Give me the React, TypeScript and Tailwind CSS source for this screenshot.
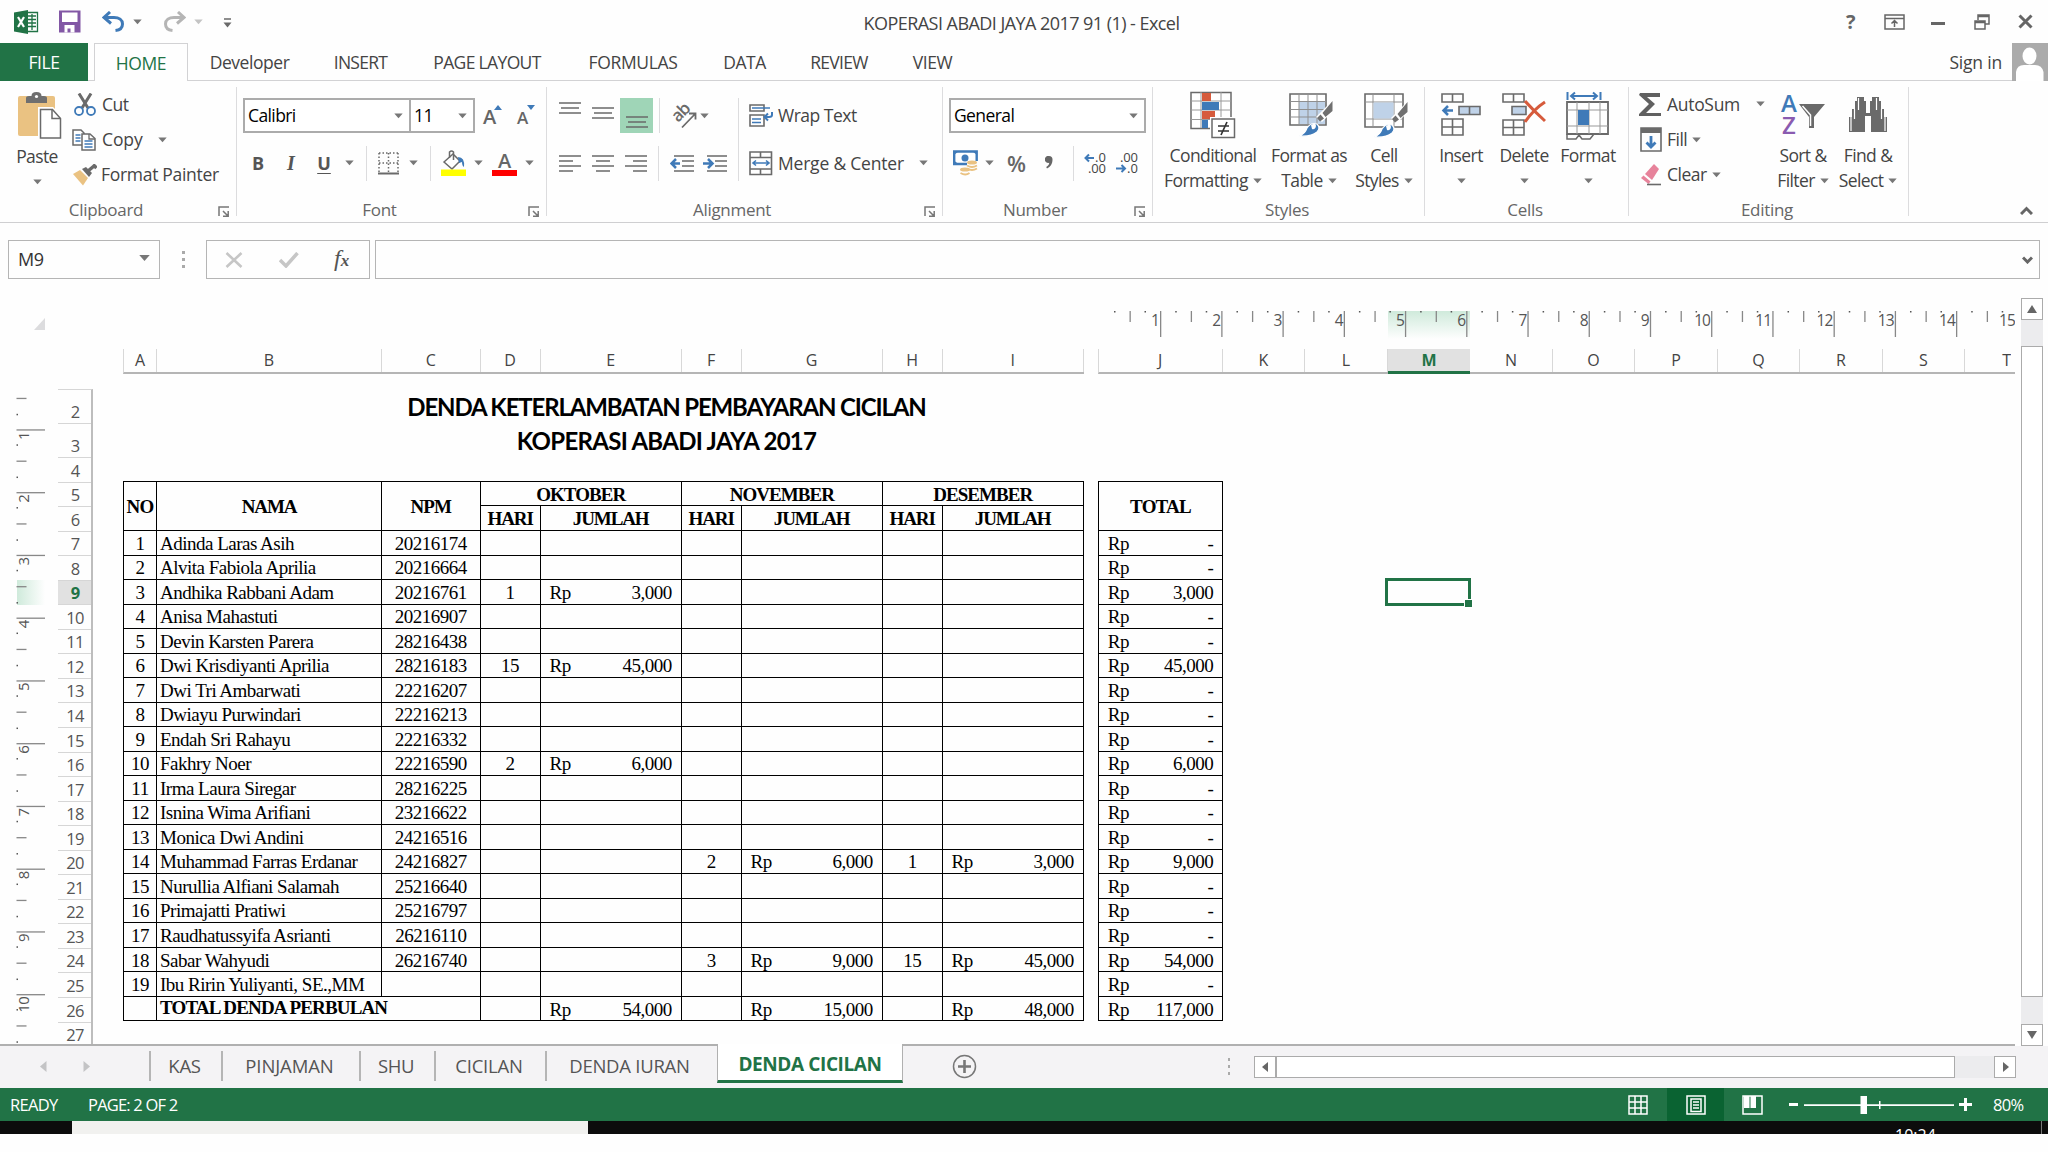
import React from 'react';
import clsx from 'clsx';

type Money = string | undefined;

interface Member {
  name: string;
  npm?: string;
  okt?: [string, Money];
  nov?: [string, Money];
  des?: [string, Money];
  total: string;
}

const members: Member[] = [
  { name: 'Adinda Laras Asih', npm: '20216174', total: '-' },
  { name: 'Alvita Fabiola Aprilia', npm: '20216664', total: '-' },
  { name: 'Andhika Rabbani Adam', npm: '20216761', okt: ['1', '3,000'], total: '3,000' },
  { name: 'Anisa Mahastuti', npm: '20216907', total: '-' },
  { name: 'Devin Karsten Parera', npm: '28216438', total: '-' },
  { name: 'Dwi Krisdiyanti Aprilia', npm: '28216183', okt: ['15', '45,000'], total: '45,000' },
  { name: 'Dwi Tri Ambarwati', npm: '22216207', total: '-' },
  { name: 'Dwiayu Purwindari', npm: '22216213', total: '-' },
  { name: 'Endah Sri Rahayu', npm: '22216332', total: '-' },
  { name: 'Fakhry Noer', npm: '22216590', okt: ['2', '6,000'], total: '6,000' },
  { name: 'Irma Laura Siregar', npm: '28216225', total: '-' },
  { name: 'Isnina Wima Arifiani', npm: '23216622', total: '-' },
  { name: 'Monica Dwi Andini', npm: '24216516', total: '-' },
  { name: 'Muhammad Farras Erdanar', npm: '24216827', nov: ['2', '6,000'], des: ['1', '3,000'], total: '9,000' },
  { name: 'Nurullia Alfiani Salamah', npm: '25216640', total: '-' },
  { name: 'Primajatti Pratiwi', npm: '25216797', total: '-' },
  { name: 'Raudhatussyifa Asrianti', npm: '26216110', total: '-' },
  { name: 'Sabar Wahyudi', npm: '26216740', nov: ['3', '9,000'], des: ['15', '45,000'], total: '54,000' },
  { name: 'Ibu Ririn Yuliyanti, SE.,MM', total: '-' },
];

const G = '#6a6a6a';
const B = '#3f7ab8';

function Arrow({ className, color = '#777' }: { className?: string; color?: string }) {
  return (
    <svg className={clsx('shrink-0', className)} width="9" height="6" viewBox="0 0 9 6">
      <path d="M0.3 0.5h8.4L4.5 5.3z" fill={color} />
    </svg>
  );
}

function Sep({ className }: { className?: string }) {
  return <div className={clsx('w-px shrink-0 bg-[#dcdcde]', className)} />;
}

function Launcher() {
  return (
    <svg width="12" height="12" viewBox="0 0 12 12" fill="none" stroke="#777" strokeWidth="1.5">
      <path d="M1 10V1h10M5 5l5 5M10.2 5v5.2H5" />
    </svg>
  );
}

/* ---------- title bar ---------- */

function ExcelLogo() {
  return (
    <svg width="25" height="24" viewBox="0 0 25 24">
      <path d="M12 2.500h11.500v19H12z" fill="#fff" stroke="#217346" strokeWidth="1.300" />
      <path d="M14 6h8M14 9.500h8M14 13h8M14 16.500h8M18 4v16" stroke="#217346" strokeWidth="1.300" fill="none" />
      <path d="M0 2.500L14 0v24L0 21.500z" fill="#217346" />
      <path d="M4 7l6 10M10 7L4 17" stroke="#fff" strokeWidth="2.200" />
    </svg>
  );
}

function SaveIcon() {
  return (
    <svg width="22" height="23" viewBox="0 0 22 23">
      <path d="M0 0.500h21.500v22H0z" fill="#8257a5" />
      <path d="M3 2.500h15.500v9.500H3zM5.500 15h10v7.500h-4v-4h-3v4h-3z" fill="#fff" />
    </svg>
  );
}

function UndoIcon({ color, flip }: { color: string; flip?: boolean }) {
  return (
    <svg width="23" height="21" viewBox="0 0 23 21" className={flip ? '-scale-x-100' : ''}>
      <path d="M8 1L2 6.500l7 6" fill="none" stroke={color} strokeWidth="3" />
      <path d="M2.500 6.500H12c5 0 8.500 2.500 8.500 6.500 0 3.500-2.500 6-7 6.500" fill="none" stroke={color} strokeWidth="3" />
    </svg>
  );
}

function TitleBar() {
  return (
    <div className="flex h-[43px] items-center">
      <div className="flex w-[860px] items-center pl-[14px]">
        <ExcelLogo />
        <span className="ml-5"><SaveIcon /></span>
        <span className="ml-[21px]"><UndoIcon color={B} /></span>
        <Arrow className="ml-2" />
        <span className="ml-[21px]"><UndoIcon color="#b5b5b5" flip /></span>
        <Arrow className="ml-2" color="#c4c4c4" />
        <svg className="ml-5 mt-1" width="9" height="11" viewBox="0 0 9 11">
          <path d="M1 1h7" stroke={G} strokeWidth="1.500" />
          <path d="M0.500 4.500h8L4.500 9.500z" fill={G} />
        </svg>
      </div>
      <div className="w-[323px] whitespace-nowrap pt-[4px] text-center text-[18px] tracking-[-0.55px] text-[#444]">
        KOPERASI ABADI JAYA 2017 91 (1) - Excel
      </div>
      <div className="ml-auto flex items-center pr-[15px]">
        <span className="w-[12px] text-[20px] font-bold text-[#666]">?</span>
        <svg className="ml-[26px]" width="21" height="16" viewBox="0 0 21 16" fill="none" stroke="#666" strokeWidth="1.500">
          <path d="M1 1h19v14H1zM1 4.500h19M10.500 13V7M7.500 9.500l3-3 3 3" />
        </svg>
        <div className="ml-[26px] mt-1 h-[3px] w-[14px] bg-[#666]" />
        <svg className="ml-[29px]" width="16" height="16" viewBox="0 0 16 16" fill="none" stroke="#666" strokeWidth="1.500">
          <path d="M1 7h10v8H1zM1 8.500h10M4 6V1h11v9h-4M4 2.500h11" />
        </svg>
        <svg className="ml-[28px]" width="15" height="15" viewBox="0 0 15 15" fill="none" stroke="#666" strokeWidth="3">
          <path d="M1.500 1.500l12 12M13.500 1.500l-12 12" />
        </svg>
      </div>
    </div>
  );
}

/* ---------- ribbon tabs ---------- */

const tabs: [string, string][] = [
  ['Developer', 'w-[125px] tracking-[-0.45px]'],
  ['INSERT', 'w-[97px] tracking-[-0.7px]'],
  ['PAGE LAYOUT', 'w-[156px] tracking-[-0.65px]'],
  ['FORMULAS', 'w-[136px] tracking-[-0.35px]'],
  ['DATA', 'w-[87px] tracking-[-0.5px]'],
  ['REVIEW', 'w-[102px] tracking-[-0.7px]'],
  ['VIEW', 'w-[85px] tracking-[-0.4px]'],
];

function Tabs() {
  return (
    <div className="flex h-[38px] border-b border-[#d2d2d4] text-[17.500px] leading-[38px] text-[#444]">
      <div className="h-[38px] w-[88px] bg-[#217346] text-center tracking-[-0.4px] text-white">FILE</div>
      <div className="ml-[6px] h-[38px] w-[94px] border border-b-0 border-[#d2d2d4] bg-[#fefefe] text-center tracking-[-0.4px] text-[#217346]">
        HOME
      </div>
      <div className="-ml-px flex">
        {tabs.map(([label, cls]) => (
          <div key={label} className={clsx('text-center', cls)}>{label}</div>
        ))}
      </div>
      <div className="ml-auto mr-[10px] tracking-[-0.2px]">Sign in</div>
      <svg width="36" height="38" viewBox="0 0 36 38">
        <path d="M0 0h36v38H0z" fill="#ababab" />
        <ellipse cx="17.500" cy="13" rx="7" ry="8.500" fill="#fff" />
        <path d="M4 38V29q1-7 8-7h11q7 0 8.500 7v9z" fill="#fff" />
      </svg>
    </div>
  );
}

/* ---------- ribbon ---------- */

function Group({ label, className, labelClass, launcher, children }: {
  label: string;
  className: string;
  labelClass: string;
  launcher?: boolean;
  children: React.ReactNode;
}) {
  return (
    <div className={clsx('flex h-[142px] shrink-0 pt-[6px]', className)}>
      <div className="flex min-w-0 flex-1 flex-col">
        <div className="flex h-[112px]">{children}</div>
        <div className="flex h-[22px] items-center">
          <div className={clsx('text-center text-[17px] tracking-[-0.3px] text-[#666]', labelClass)}>{label}</div>
          {launcher && <div className="ml-auto mr-[6px] pt-[3px]"><Launcher /></div>}
        </div>
      </div>
      <Sep className="h-[129px]" />
    </div>
  );
}

function BigButton({ icon, lines, className, arrowBelow }: {
  icon: React.ReactNode;
  lines: string[];
  className: string;
  arrowBelow?: boolean;
}) {
  return (
    <div className={clsx('flex shrink-0 flex-col items-center whitespace-nowrap tracking-[-0.6px]', className)}>
      <div className="flex h-[56px] items-center">{icon}</div>
      <div className="h-[25px] leading-[25px]">{lines[0]}</div>
      <div className="flex h-[25px] items-center leading-[25px]">
        {lines[1]}
        <Arrow className={arrowBelow ? '' : 'ml-[5px]'} />
      </div>
    </div>
  );
}

function PasteIcon() {
  return (
    <svg width="44" height="48" viewBox="0 0 44 48">
      <path d="M0 6q0-2 2-2h33q2 0 2 2v38H2q-2 0-2-2z" fill="#eac282" />
      <path d="M8 11V6q0-2 3-2h2.500q0-4 5-4t5 4H26q3 0 3 2v5z" fill="#6f6f6f" />
      <circle cx="18.500" cy="4.500" r="1.600" fill="#fff" />
      <path d="M20 15h15l10 10v22H20z" fill="#fff" />
      <path d="M22.500 17.500h12l8 9v19.500h-20z" fill="#fff" stroke={G} strokeWidth="1.500" />
      <path d="M34 17.500v9h8.500" fill="none" stroke={G} strokeWidth="1.500" />
    </svg>
  );
}

function CutIcon() {
  return (
    <svg width="22" height="23" viewBox="0 0 22 23" fill="none">
      <path d="M5 0.500L14 15M17 0.500L8 15" stroke={G} strokeWidth="3" />
      <circle cx="5" cy="18" r="4" stroke={B} strokeWidth="1.800" />
      <circle cx="17" cy="18" r="4" stroke={B} strokeWidth="1.800" />
    </svg>
  );
}

function CopyIcon() {
  return (
    <svg width="24" height="22" viewBox="0 0 24 22" fill="none">
      <path d="M1 1h8l3 3v12H1z" fill="#fff" stroke={G} strokeWidth="1.500" />
      <path d="M3.500 6h5M3.500 9h5M3.500 12h5" stroke={B} strokeWidth="1.500" />
      <path d="M10 5h8l5 4.500V21H10z" fill="#fff" stroke={G} strokeWidth="1.500" />
      <path d="M17 5v5h6" stroke={G} strokeWidth="1.300" />
      <path d="M12.500 12h8M12.500 15h8M12.500 18h8" stroke={B} strokeWidth="1.500" />
    </svg>
  );
}

function BrushIcon() {
  return (
    <svg width="24" height="22" viewBox="0 0 24 22">
      <path d="M0 10l7-4 8 8-5 7.500z" fill="#eac282" />
      <path d="M9 5l4-2 6 6-3 4z" fill={G} />
      <path d="M15 7l6-5M20 0.500l3.500 3.500" stroke={G} strokeWidth="3.500" />
    </svg>
  );
}

function Clipboard() {
  return (
    <Group label="Clipboard" className="w-[237px]" labelClass="w-[212px]" launcher>
      <BigButton
        icon={<span className="ml-[5px]"><PasteIcon /></span>}
        lines={['Paste', '']}
        className="w-[74px] pt-px"
        arrowBelow
      />
      <div className="flex flex-col">
        <div className="flex h-[35px] items-center"><CutIcon /><span className="ml-[6px] tracking-[-0.5px]">Cut</span></div>
        <div className="flex h-[35px] items-center">
          <span className="-ml-[2px]"><CopyIcon /></span>
          <span className="ml-[6px] tracking-[-0.1px]">Copy</span>
          <Arrow className="ml-[15px]" />
        </div>
        <div className="flex h-[35px] items-center">
          <span className="-ml-px"><BrushIcon /></span>
          <span className="ml-[4px] whitespace-nowrap tracking-[-0.3px]">Format Painter</span>
        </div>
      </div>
    </Group>
  );
}

function Combo({ text, className }: { text: string; className: string }) {
  return (
    <div className={clsx('flex h-[35px] items-center border-2 border-[#ababab] bg-white pl-[3px] tracking-[-0.6px] text-black', className)}>
      {text}
      <Arrow className="ml-auto mr-[6px]" />
    </div>
  );
}

function FontGroup() {
  return (
    <Group label="Font" className="w-[310px]" labelClass="w-[285px]" launcher>
      <div className="flex flex-col pl-[6px]">
        <div className="mt-[11px] flex h-[35px]">
          <Combo text="Calibri" className="w-[168px]" />
          <Combo text="11" className="-ml-[2px] w-[66px]" />
          <div className="ml-[8px] flex h-[35px] w-[20px] items-end text-[20px] font-semibold leading-[32px] text-[#666]">
            <span>A</span>
            <svg className="-ml-[2px] mb-[23px] shrink-0" width="8" height="5" viewBox="0 0 8 5"><path d="M0 5h8L4 0z" fill={B} /></svg>
          </div>
          <div className="ml-[14px] flex h-[35px] items-end text-[17px] font-semibold leading-[31px] text-[#666]">
            <span>A</span>
            <svg className="-ml-px mb-[23px] shrink-0" width="8" height="5" viewBox="0 0 8 5"><path d="M0 0h8L4 5z" fill={B} /></svg>
          </div>
        </div>
        <div className="mt-[12px] flex h-[36px] items-center font-bold text-[#555]">
          <span className="w-[30px] text-center text-[18px]">B</span>
          <span className="ml-[3px] w-[30px] text-center font-['Liberation_Serif',serif] text-[20px] italic">I</span>
          <span className="ml-[3px] w-[30px] text-center text-[18px] underline underline-offset-[3px]">U</span>
          <Arrow className="ml-[6px]" />
          <Sep className="ml-[12px] h-[35px]" />
          <svg className="ml-[11px]" width="21" height="23" viewBox="0 0 21 23" fill="none" stroke={G} strokeWidth="1.500">
            <path d="M1 1h19M1 11h19M1 1v20M10.500 1v20M20 1v20" strokeDasharray="1.500 2" />
            <path d="M0 21.500h21" strokeWidth="2" />
          </svg>
          <Arrow className="ml-[10px]" />
          <Sep className="ml-[12px] h-[35px]" />
          <svg className="ml-[10px]" width="25" height="26" viewBox="0 0 25 26" fill="none">
            <path d="M3 12l9-8 7 7-8 8z" fill="#fff" stroke={G} strokeWidth="1.500" />
            <path d="M8.500 8V2q2-2 4 0v8" stroke={G} strokeWidth="1.500" />
            <path d="M17 7q7 0 6 10-2-1-2-5l-3 1z" fill={B} />
            <path d="M0 19.500h25V26H0z" fill="#ffff00" />
          </svg>
          <Arrow className="ml-[8px]" />
          <div className="ml-[9px] flex h-[29px] w-[25px] flex-col items-center pt-[2px] text-[20px] leading-[20px]">
            <div className="h-[19px] font-semibold text-[#666]">A</div>
            <div className="h-[6px] w-[25px] shrink-0 bg-[#ff0000]" />
          </div>
          <Arrow className="ml-[8px]" />
        </div>
      </div>
    </Group>
  );
}

function AlignIcon({ d }: { d: string }) {
  return (
    <svg width="22" height="17" viewBox="0 0 22 17" fill="none" stroke={G} strokeWidth="1.600">
      <path d={d} />
    </svg>
  );
}

function IndentIcon({ right }: { right?: boolean }) {
  return (
    <svg width="25" height="17" viewBox="0 0 25 17" fill="none">
      <path d="M4 1h20M12 6h12M12 11h12M4 16h20" stroke={G} strokeWidth="1.600" />
      <path d={right ? 'M0 8.500h9M5 4l4.500 4.500L5 13' : 'M10 8.500H1.500M6 4L1.500 8.500 6 13'} stroke={B} strokeWidth="2.500" />
    </svg>
  );
}

function Alignment() {
  const three = 'M0 3h22M2 8h18M0 13h22';
  return (
    <Group label="Alignment" className="w-[396px]" labelClass="w-[370px]" launcher>
      <div className="mt-[11px] flex flex-col">
        <div className="flex h-[35px] items-center">
          <div className="ml-[12px] mb-[15px]"><AlignIcon d={three} /></div>
          <div className="ml-[11px] mb-[4px]"><AlignIcon d={three} /></div>
          <div className="ml-[6px] flex h-[35px] w-[33px] justify-center bg-[#9fd5b7] pt-[16px]"><AlignIcon d={three} /></div>
          <Sep className="ml-[6px] h-[35px]" />
          <svg className="ml-[12px] overflow-visible" width="25" height="25" viewBox="0 0 25 25">
            <text transform="translate(6 20) rotate(-45)" fontSize="17" fontWeight="600" letterSpacing="-1" fill={G}>ab</text>
            <path d="M10 24.500L23 11M17 10.500h6.500v6" fill="none" stroke={G} strokeWidth="1.800" />
          </svg>
          <Arrow className="ml-[3px]" />
        </div>
        <div className="mt-[12px] flex h-[36px] items-center">
          <div className="ml-[12px]"><AlignIcon d="M0 1h22M0 6h14M0 11h22M0 16h14" /></div>
          <div className="ml-[11px]"><AlignIcon d="M0 1h22M4 6h14M0 11h22M4 16h14" /></div>
          <div className="ml-[11px]"><AlignIcon d="M0 1h22M8 6h14M0 11h22M8 16h14" /></div>
          <Sep className="ml-[11px] h-[35px]" />
          <div className="ml-[11px]"><IndentIcon /></div>
          <div className="ml-[8px]"><IndentIcon right /></div>
        </div>
      </div>
      <Sep className="ml-[10px] mt-[11px] h-[83px]" />
      <div className="mt-[11px] flex flex-col whitespace-nowrap pl-[10px]">
        <div className="flex h-[35px] items-center">
          <svg width="25" height="25" viewBox="0 0 25 25" fill="none">
            <path d="M1 2h14v6H1zM1 12h14v11H1z" stroke={G} strokeWidth="1.600" />
            <path d="M3 5h18M3 16h9M3 19.500h9" stroke={B} strokeWidth="1.600" />
            <path d="M23 9v3q0 2-3 2h-4M19 10.500L15.500 14l3.500 3.500" stroke={B} strokeWidth="2" />
          </svg>
          <span className="ml-[4px] tracking-[-0.5px]">Wrap Text</span>
        </div>
        <div className="mt-[12px] flex h-[36px] items-center">
          <svg width="24" height="25" viewBox="0 0 24 25" fill="none">
            <path d="M1 1h21.500v22.500H1zM1 6.500h21.500M1 18h21.500M11.500 1v5.500M11.500 18v5.500" stroke={G} strokeWidth="1.600" />
            <path d="M4 12h16M7 9.500L4 12l3 2.500M17 9.500l3 2.500-3 2.500" stroke={B} strokeWidth="1.600" />
          </svg>
          <span className="ml-[5px] w-[141px] tracking-[-0.2px]">Merge &amp; Center</span>
          <Arrow />
        </div>
      </div>
    </Group>
  );
}

function DecimalIcon({ more }: { more?: boolean }) {
  return (
    <svg className="overflow-visible" width="23" height="24" viewBox="0 0 23 24" fill="none">
      {more ? (
        <>
          <text x="11" y="10.500" fontSize="13" fill="#444" textLength="11">.0</text>
          <text x="4" y="22" fontSize="13" fill="#444" textLength="18">.00</text>
          <path d="M10 7H1.500M5 3.500L1.500 7 5 10.500" stroke={B} strokeWidth="2" />
        </>
      ) : (
        <>
          <text x="4" y="10.500" fontSize="13" fill="#444" textLength="18">.00</text>
          <text x="11" y="22" fontSize="13" fill="#444" textLength="11">.0</text>
          <path d="M0 17.500h9M5.500 14L9 17.500 5.500 21" stroke={B} strokeWidth="2" />
        </>
      )}
    </svg>
  );
}

function NumberGroup() {
  return (
    <Group label="Number" className="w-[210px]" labelClass="w-[184px]" launcher>
      <div className="flex flex-col pl-[6px]">
        <Combo text="General" className="mt-[11px] w-[197px]" />
        <div className="mt-[12px] flex h-[36px] items-center">
          <svg className="ml-[4px]" width="26" height="26" viewBox="0 0 26 26" fill="none">
            <path d="M1.200 1.500h22.500v12.500H1.200z" fill="#fff" stroke={B} strokeWidth="2.400" />
            <path d="M1 1h5l-5 4zM24 1h-5l5 4zM1 14.500h5l-5-4z" fill={B} />
            <circle cx="12" cy="8" r="3.500" fill={B} />
            <path d="M14 11h11v11H7v-5h7z" fill="#fefefe" />
            <ellipse cx="19" cy="12.500" rx="5" ry="2" fill="#eac282" />
            <path d="M14 15.500q5 3 10 0M14 18.500q5 3 10 0" stroke="#eac282" strokeWidth="1.800" />
            <ellipse cx="12" cy="19.500" rx="5" ry="2" fill="#eac282" />
            <path d="M7.500 23q5 3 9 0" stroke="#eac282" strokeWidth="1.800" />
          </svg>
          <Arrow className="ml-[6px]" />
          <span className="ml-[13px] w-[20px] text-[22px] font-semibold tracking-[-1px] text-[#666]">%</span>
          <svg className="mb-[2px] ml-[18px]" width="8" height="13" viewBox="0 0 8 13">
            <path d="M4 0a3.500 3.500 0 013.500 3.500c0 4-2 7.500-5.500 9l-0.800-1.500c2-1 3-2.500 3-4.200A3.500 3.500 0 114 0z" fill="#666" />
          </svg>
          <Sep className="ml-[20px] h-[35px]" />
          <div className="ml-[10px]"><DecimalIcon more /></div>
          <div className="ml-[9px]"><DecimalIcon /></div>
        </div>
      </div>
    </Group>
  );
}

function CondIcon() {
  return (
    <svg width="46" height="48" viewBox="0 0 46 48" fill="none">
      <path d="M1 1.500h40v36H1z" fill="#fff" stroke={G} strokeWidth="1.500" />
      <path d="M1 10h40M1 19h40M1 28.500h40M11 1v36M31 1v36" stroke="#9a9a9a" />
      <path d="M12 2h9v8h-9zM12 20h13v8H12z" fill="#d65b3c" />
      <path d="M12 11h17v8H12zM12 29h6v8h-6z" fill={B} />
      <path d="M20 26h26v22H20z" fill="#fff" />
      <path d="M22 28h22.500v18.500H22z" fill="#fff" stroke={G} strokeWidth="1.500" />
      <path d="M28 35h11M28 40h11M37 31l-6 13" stroke="#333" strokeWidth="1.700" />
    </svg>
  );
}

function BrushOver({ y = 0 }: { y?: number }) {
  return (
    <g transform={`translate(0 ${y})`}>
      <path d="M43 9v11L33 30l-6-5z" fill="#fff" />
      <path d="M43.500 9v10l-7 6-3-4zM31.500 22.500l3.500 4-4 3-3-3.500z" fill="#707070" />
      <path d="M10 44q6-2 8-8 4-6 10-4 4 4 0 8-6 5-18 4z" fill={B} stroke="#fff" strokeWidth="1.200" />
      <path d="M22 33q5-3 5 1-1 4-4 3z" fill="#fff" />
    </g>
  );
}

function TableIcon() {
  return (
    <svg width="44" height="46" viewBox="0 0 44 46" fill="none">
      <path d="M1 2h36v31H1z" fill="#fff" stroke={G} strokeWidth="1.600" />
      <path d="M10 10h26v22H10z" fill="#bfd2e8" />
      <path d="M1 9.500h36M1 17.500h36M1 25h36M10 2v31M19 2v31M28 2v31" stroke="#8f8f8f" />
      <BrushOver />
    </svg>
  );
}

function CellStyleIcon() {
  return (
    <svg width="44" height="48" viewBox="0 0 44 48" fill="none">
      <path d="M1 3h38v33H1z" fill="#fff" stroke={G} strokeWidth="1.600" />
      <path d="M1 11h38M1 28h38M9 3v33M30 3v33" stroke="#8f8f8f" />
      <path d="M9.500 11.500h20v16h-20z" fill="#bfd2e8" />
      <BrushOver y={2} />
    </svg>
  );
}

function Styles() {
  return (
    <Group label="Styles" className="w-[272px]" labelClass="w-[268px]">
      <BigButton icon={<CondIcon />} lines={['Conditional', 'Formatting']} className="ml-[8px] w-[104px]" />
      <BigButton icon={<span className="ml-[4px]"><TableIcon /></span>} lines={['Format as', 'Table']} className="ml-px w-[86px]" />
      <BigButton icon={<span className="ml-[4px]"><CellStyleIcon /></span>} lines={['Cell', 'Styles']} className="ml-px w-[62px]" />
    </Group>
  );
}

function Cells() {
  return (
    <Group label="Cells" className="w-[204px]" labelClass="w-[200px]">
      <BigButton
        className="ml-[5px] w-[62px]"
        arrowBelow
        lines={['Insert', '']}
        icon={
          <svg width="41" height="46" viewBox="0 0 41 46" fill="none" stroke={G} strokeWidth="1.600">
            <path d="M1 2h21v8H1zM11.500 2v8M1 27h21v16H1zM11.500 27v16M1 35h21" />
            <path d="M18 14.500h21v8H18z" fill="#bfd2e8" /><path d="M28.500 14.500v8" />
            <path d="M12 18.500H3M7 14l-4.500 4.500L7 23" stroke={B} strokeWidth="2.500" />
          </svg>
        }
      />
      <BigButton
        className="w-[64px]"
        arrowBelow
        lines={['Delete', '']}
        icon={
          <svg width="45" height="46" viewBox="0 0 45 46" fill="none" stroke={G} strokeWidth="1.600">
            <path d="M1 2h21v8H1zM11.500 2v8M1 28h21v15H1zM11.500 28v15M1 35.500h21" />
            <path d="M10 14.500h14v8H10z" fill="#bfd2e8" />
            <path d="M23 9q9 10 20 20M43 10Q32 17 23 30" stroke="#d65b3c" strokeWidth="3" />
          </svg>
        }
      />
      <BigButton
        className="w-[64px]"
        arrowBelow
        lines={['Format', '']}
        icon={
          <svg width="44" height="50" viewBox="0 0 44 50" fill="none" stroke={G} strokeWidth="1.500">
            <path d="M1 12h41v32H1z" fill="#fff" strokeWidth="1.800" />
            <path d="M1 20h41M1 36h41M11 12v32M23 12v32M34 12v32" stroke="#999" strokeWidth="1" />
            <path d="M12 20h11v15H12z" fill={B} stroke="none" />
            <path d="M1 44v5h9l3-4M13 45l3 4h8l4-5" />
            <path d="M1.500 2v8M34.500 2v8M5 6h26M9 2.500L5 6l4 3.500M27 2.500L31 6l-4 3.500" stroke={B} strokeWidth="2" />
          </svg>
        }
      />
    </Group>
  );
}

function Editing() {
  return (
    <Group label="Editing" className="w-[280px]" labelClass="w-[276px]">
      <div className="ml-[10px] flex w-[136px] flex-col">
        <div className="flex h-[35px] items-center pb-px">
          <svg width="23" height="25" viewBox="0 0 23 25"><path d="M1 1h20v4H8l8 7-9 9h15v3H0v-2l10-10L0 3z" fill="#606060" /></svg>
          <span className="ml-[5px] tracking-[-0.3px]">AutoSum</span>
          <Arrow className="ml-auto mr-[10px]" />
        </div>
        <div className="flex h-[35px] items-center">
          <svg className="ml-px" width="22" height="25" viewBox="0 0 22 25" fill="none">
            <path d="M1 1h20v23H1z" stroke={G} strokeWidth="1.600" /><path d="M1 1h20v5H1z" fill={G} />
            <path d="M11 9v11M6.500 15.500L11 20l4.500-4.500" stroke={B} strokeWidth="2.800" />
          </svg>
          <span className="ml-[5px] tracking-[-0.5px]">Fill</span>
          <Arrow className="ml-[5px]" />
        </div>
        <div className="flex h-[35px] items-center">
          <svg className="ml-px" width="22" height="22" viewBox="0 0 22 22" fill="none">
            <path d="M5 10l9-10 5 5-7 11z" fill="#e7839b" /><path d="M3.500 11.500l7 6-2 2.500L1 14z" fill="#e7839b" />
            <path d="M7 20.500h14" stroke={G} strokeWidth="1.600" />
          </svg>
          <span className="ml-[5px] tracking-[-0.5px]">Clear</span>
          <Arrow className="ml-[5px]" />
        </div>
      </div>
      <BigButton
        className="w-[56px]"
        lines={['Sort &', 'Filter']}
        icon={
          <svg className="overflow-visible" width="45" height="44" viewBox="0 0 45 44" fill="none">
            <text x="0" y="19" fontSize="24" fontWeight="600" fill={B}>A</text>
            <text x="1" y="41" fontSize="24" fontWeight="600" fill="#8a5bb0">Z</text>
            <path d="M18 11h26L33 24v11h-5V24z" fill={G} /><path d="M21.500 13l8 9v11" stroke="#fff" strokeWidth="1.500" />
          </svg>
        }
      />
      <BigButton
        className="ml-[6px] w-[62px]"
        lines={['Find &', 'Select']}
        icon={
          <svg width="40" height="38" viewBox="0 0 40 38" fill={G}>
            <path d="M9 1h7v4h2v12h4V5h2V1h7v4h2v8h3v8h3v15H23V20h-6v16H1V21h3v-8h3V5h2z" />
            <path d="M10.500 2v12M6.500 13v10M3 21v14M28.500 2v12M33.500 13v10M37 21v14" stroke="#fff" strokeWidth="1.200" />
            <path d="M18.500 14.500h3v2.500h-3z" fill="#fff" />
          </svg>
        }
      />
    </Group>
  );
}

function Ribbon() {
  return (
    <div className="flex h-[142px] border-b border-[#cfcfd1] text-[17.500px] text-[#444]">
      <Clipboard />
      <FontGroup />
      <Alignment />
      <NumberGroup />
      <Styles />
      <Cells />
      <Editing />
      <svg className="ml-auto mr-[15px] mt-[125px]" width="13" height="9" viewBox="0 0 13 9" fill="none" stroke="#666" strokeWidth="3">
        <path d="M1 8l5.500-5.500L12 8" />
      </svg>
    </div>
  );
}

/* ---------- formula bar ---------- */

function FormulaBar() {
  return (
    <div className="flex h-[39px] pl-[8px] pr-[8px]">
      <div className="flex w-[152px] items-center border border-[#b5b5b5] pl-[9px] text-[18px] tracking-[-0.5px] text-[#333]">
        M9
        <Arrow className="mb-1 ml-auto mr-[10px] scale-125" />
      </div>
      <div className="flex w-[46px] flex-col items-center justify-center gap-[4px] pb-px">
        {[0, 1, 2].map((i) => <div key={i} className="size-[3px] bg-[#aaa]" />)}
      </div>
      <div className="flex w-[164px] items-center border border-[#b5b5b5] pl-[18px]">
        <svg width="18" height="16" viewBox="0 0 18 16" fill="none" stroke="#c6c6c6" strokeWidth="2.600"><path d="M1.500 1l15 14M16.500 1l-15 14" /></svg>
        <svg className="ml-[36px]" width="20" height="16" viewBox="0 0 20 16" fill="none" stroke="#c6c6c6" strokeWidth="3.500"><path d="M1 8l6 6L18.500 1" /></svg>
        <span className="ml-[35px] pb-1 font-['Liberation_Serif',serif] text-[24px] italic leading-none text-[#555]">
          f<span className="text-[17px] font-bold">x</span>
        </span>
      </div>
      <div className="ml-[5px] flex flex-1 items-center justify-end border border-[#b5b5b5] pr-[6px]">
        <svg width="11" height="8" viewBox="0 0 11 8" fill="none" stroke="#666" strokeWidth="3"><path d="M1 1.500l4.500 4.500L10 1.500" /></svg>
      </div>
    </div>
  );
}

/* ---------- sheet ---------- */

const columns: [string, string][] = [
  ['A', 'w-[33px]'], ['B', 'w-[225px]'], ['C', 'w-[98.600px]'], ['D', 'w-[60px]'], ['E', 'w-[141.200px]'],
  ['F', 'w-[59.800px]'], ['G', 'w-[141.200px]'], ['H', 'w-[59.800px]'], ['I', 'w-[141.200px]'],
];
const rightColumns = ['K', 'L', 'M', 'N', 'O', 'P', 'Q', 'R', 'S'];

function HRuler() {
  return (
    <svg width="917" height="30" viewBox="1098 310 917 30">
      <defs>
        <linearGradient id="hg" x1="0" y1="0" x2="0" y2="1">
          <stop offset="0" stopColor="#cfeadb" />
          <stop offset="1" stopColor="#fefefe" />
        </linearGradient>
      </defs>
      <rect x="1388" y="311" width="82" height="28" fill="url(#hg)" />
      {Array.from({ length: 15 }, (_, i) => {
        const x = 1160.500 + i * 61.230;
        return (
          <g key={i} fill="#555">
            <rect x={x - 46.500} y="311" width="1.500" height="1.500" />
            <rect x={x - 31} y="311" width="1.300" height="11" fill="#888" />
            <rect x={x - 16} y="311" width="1.500" height="1.500" />
            {i < 14 && <rect x={x - 0.500} y="311" width="1.300" height="26" fill="#888" />}
            <text x={i === 14 ? 2015 : x - 1.500} y="326" fontSize="15.500" textAnchor="end" letterSpacing="-0.9">{i + 1}</text>
          </g>
        );
      })}
    </svg>
  );
}

function VRuler() {
  return (
    <svg className="shrink-0" width="58" height="655" viewBox="0 390 58 655">
      <defs>
        <linearGradient id="vg" x1="0" y1="0" x2="1" y2="0">
          <stop offset="0" stopColor="#cfeadb" />
          <stop offset="1" stopColor="#fefefe" />
        </linearGradient>
      </defs>
      <rect x="17" y="581" width="28" height="25" fill="url(#vg)" />
      {Array.from({ length: 11 }, (_, i) => {
        const y = 430.300 + i * 62.750;
        return (
          <g key={i} fill="#555">
            <rect x="16.500" y={y - 31.500} width="10" height="1.300" fill="#888" />
            <rect x="16.500" y={y - 15.500} width="1.500" height="1.500" />
            {i < 10 && (
              <>
                <rect x="16.500" y={y} width="28.500" height="1.300" fill="#888" />
                <rect x="16.500" y={y + 15} width="1.500" height="1.500" />
                <text transform={`translate(28.5 ${y + 3}) rotate(-90)`} textAnchor="end" fontSize="15" letterSpacing="-0.9">
                  {i + 1}
                </text>
              </>
            )}
          </g>
        );
      })}
    </svg>
  );
}

function ColumnHeaders() {
  return (
    <div className="flex h-[25px] pl-[123px] text-[16px] leading-[23px] text-[#444]">
      <div className="flex border-b-2 border-l border-b-[#b5b5b5] border-l-[#d8d8d8]">
        {columns.map(([c, w]) => (
          <div key={c} className={clsx('shrink-0 border-r border-[#d8d8d8] text-center', w)}>{c}</div>
        ))}
      </div>
      <div className="ml-[14px] flex flex-1 border-b-2 border-l border-b-[#b5b5b5] border-l-[#d8d8d8]">
        <div className="w-[124px] shrink-0 border-r border-[#d8d8d8] text-center">J</div>
        {rightColumns.map((c) => (
          <div
            key={c}
            className={clsx(
              'w-[82.500px] shrink-0 text-center',
              c === 'M' ? 'h-[25px] border-b-[3px] border-[#217346] bg-[#e1e1e1] font-bold text-[#217346]' : 'border-r border-[#d8d8d8]'
            )}
          >
            {c}
          </div>
        ))}
        <div className="w-[46px] overflow-hidden pl-[37px]">T</div>
      </div>
    </div>
  );
}

function RowHeaders() {
  return (
    <div className="flex h-[655px] w-[35px] shrink-0 flex-col overflow-hidden border-r-2 border-t border-r-[#bdbdbd] border-t-[#d6d6d6] text-[16.500px] tracking-[-0.7px] text-[#555]">
      {Array.from({ length: 26 }, (_, i) => i + 2).map((n) => (
        <div
          key={n}
          className={clsx(
            'flex shrink-0 justify-center border-b border-[#d6d6d6] pl-px',
            n < 4 ? 'h-[34px] items-end leading-[22px]' : 'h-[24.550px] items-center pt-[2px] leading-none',
            n === 9 ? '-mr-[2px] border-r-2 border-r-[#217346] bg-[#e1e1e1] font-bold text-[#217346]' : ''
          )}
        >
          {n}
        </div>
      ))}
    </div>
  );
}

function Cell({ className, children }: { className?: string; children?: React.ReactNode }) {
  return (
    <div className={clsx('flex items-center whitespace-nowrap border-b border-r border-black pt-px leading-none', className)}>
      {children}
    </div>
  );
}

function Amount({ value }: { value?: string }) {
  return (
    <Cell className="justify-between pl-[9px] pr-[9px]">
      {value && (
        <>
          <span>Rp</span>
          <span>{value}</span>
        </>
      )}
    </Cell>
  );
}

function Fines() {
  return (
    <div className="grid shrink-0 grid-cols-[33px_225px_98.600px_60px_141.200px_59.800px_141.200px_59.800px_141.200px] grid-rows-[24px_25px_repeat(20,24.530px)] border-l border-t border-black">
      <Cell className="row-span-2 justify-center font-bold tracking-[-0.8px]">NO</Cell>
      <Cell className="row-span-2 justify-center font-bold tracking-[-1.1px]">NAMA</Cell>
      <Cell className="row-span-2 justify-center font-bold tracking-[-0.9px]">NPM</Cell>
      {['OKTOBER', 'NOVEMBER', 'DESEMBER'].map((m) => (
        <Cell key={m} className="col-span-2 justify-center font-bold tracking-[-0.95px]">{m}</Cell>
      ))}
      {[0, 1, 2].map((i) => (
        <React.Fragment key={i}>
          <Cell className="justify-center font-bold tracking-[-1.1px]">HARI</Cell>
          <Cell className="justify-center font-bold tracking-[-1.1px]">JUMLAH</Cell>
        </React.Fragment>
      ))}
      {members.map((m, i) => (
        <React.Fragment key={m.name}>
          <Cell className="justify-center">{i + 1}</Cell>
          <Cell className="pl-[3px]">{m.name}</Cell>
          <Cell className="justify-center">{m.npm}</Cell>
          {[m.okt, m.nov, m.des].map((f, k) => (
            <React.Fragment key={k}>
              <Cell className="justify-center">{f?.[0]}</Cell>
              <Amount value={f?.[1]} />
            </React.Fragment>
          ))}
        </React.Fragment>
      ))}
      <Cell />
      <Cell className="col-span-2 pb-[3px] pl-[3px] font-bold tracking-[-0.85px]">TOTAL DENDA PERBULAN</Cell>
      <Cell />
      <Amount value="54,000" />
      <Cell />
      <Amount value="15,000" />
      <Cell />
      <Amount value="48,000" />
    </div>
  );
}

function Totals() {
  return (
    <div className="ml-[14px] grid shrink-0 grid-cols-[124.500px] grid-rows-[49px_repeat(20,24.530px)] border-l border-t border-black">
      <Cell className="justify-center font-bold tracking-[-0.8px]">TOTAL</Cell>
      {members.map((m) => <Amount key={m.name} value={m.total} />)}
      <Amount value="117,000" />
    </div>
  );
}

function ScrollButton({ d, className }: { d: string; className?: string }) {
  return (
    <div className={clsx('flex size-[22px] shrink-0 items-center justify-center border border-[#ababab] bg-white', className)}>
      <svg width="12" height="12" viewBox="0 0 12 12"><path d={d} fill="#666" /></svg>
    </div>
  );
}

function Sheet() {
  return (
    <div className="flex h-[767px]">
      <div className="flex w-[2015px] flex-col border-b-2 border-[#b0b0b0]">
        <div className="flex h-[71px] items-start">
          <svg className="ml-[34px] mt-[39px]" width="11" height="12" viewBox="0 0 11 12"><path d="M11 0v12H0z" fill="#dcdcde" /></svg>
          <div className="ml-auto mt-[31px]"><HRuler /></div>
        </div>
        <ColumnHeaders />
        <div className="mt-[15px] flex flex-1">
          <VRuler />
          <RowHeaders />
          <div className="ml-[30px] flex flex-col text-black">
            <div className="flex h-[92px] w-[1087px] flex-col items-center whitespace-nowrap pt-px font-['Lato',sans-serif] text-[24px] font-bold leading-[34px]">
              <div className="tracking-[-1.15px]">DENDA KETERLAMBATAN PEMBAYARAN CICILAN</div>
              <div className="tracking-[-0.7px]">KOPERASI ABADI JAYA 2017</div>
            </div>
            <div className="flex font-['Liberation_Serif',serif] text-[19px] tracking-[-0.5px]">
              <Fines />
              <Totals />
              <div className="relative ml-[162px] mt-[97px] h-[28px] w-[86px] border-[3px] border-[#217346]">
                <div className="absolute -bottom-[5px] -right-[5px] size-[9px] border border-white bg-[#217346]" />
              </div>
            </div>
          </div>
        </div>
      </div>
      <div className="ml-[6px] mt-[19px] flex h-[748px] w-[22px] flex-col bg-[#ececee]">
        <ScrollButton d="M6 2l5 8H1z" />
        <div className="mt-[26px] h-[651px] border border-[#ababab] bg-white" />
        <ScrollButton className="mt-auto" d="M6 10l5-8H1z" />
      </div>
    </div>
  );
}

/* ---------- sheet tabs and status bar ---------- */

const sheets: [string, string][] = [
  ['KAS', 'w-[72px] tracking-[-0.3px]'],
  ['PINJAMAN', 'w-[138px] tracking-[-0.1px]'],
  ['SHU', 'w-[75px] tracking-[-0.5px]'],
  ['CICILAN', 'w-[111px] tracking-[-0.2px]'],
  ['DENDA IURAN', 'w-[170px] tracking-[-0.25px]'],
];

function SheetTabs() {
  return (
    <div className="flex h-[42px] bg-[#f4f3f5] text-[18.500px] text-[#555]">
      <div className="flex w-[149px] items-center pb-[2px] pl-[40px]">
        <svg width="7" height="11" viewBox="0 0 7 11"><path d="M6.500 0v11L0 5.500z" fill="#c3c3c5" /></svg>
        <svg className="ml-[36px]" width="7" height="11" viewBox="0 0 7 11"><path d="M0.500 0v11L7 5.500z" fill="#c3c3c5" /></svg>
      </div>
      {sheets.map(([s, w]) => (
        <div key={s} className={clsx('mt-[5px] h-[30px] whitespace-nowrap border-l-2 border-[#b5b5b5] pr-[3px] text-center leading-[29px]', w)}>{s}</div>
      ))}
      <div className="-mt-[2px] ml-[2px] h-[39px] w-[186px] whitespace-nowrap border-x border-b-[3px] border-x-[#b0b0b0] border-b-[#217346] bg-white text-center text-[19px] font-bold leading-[40px] tracking-[-0.4px] text-[#217346]">
        DENDA CICILAN
      </div>
      <svg className="ml-[49px] mt-[8px]" width="25" height="25" viewBox="0 0 25 25" fill="none" stroke="#777">
        <circle cx="12.500" cy="12.500" r="11" strokeWidth="1.500" />
        <path d="M12.500 6v13M6 12.500h13" strokeWidth="2.600" />
      </svg>
      <div className="ml-auto mr-[24px] mt-[12px] flex flex-col gap-[4px]">
        {[0, 1, 2].map((i) => <div key={i} className="h-[3px] w-[2px] bg-[#aaa]" />)}
      </div>
      <div className="mr-[32px] mt-[10px] flex h-[22px] w-[762px] bg-[#ececee]">
        <ScrollButton d="M9 1v10L3 6z" />
        <div className="w-[679px] border border-[#ababab] bg-white" />
        <ScrollButton className="ml-auto" d="M4 1v10l6-5z" />
      </div>
    </div>
  );
}

function StatusBar() {
  return (
    <div className="flex h-[33px] items-center bg-[#217346] text-[16.500px] tracking-[-0.7px] text-white">
      <span className="ml-[10px] w-[78px] pt-px">READY</span>
      <span className="pt-px tracking-[-0.8px]">PAGE: 2 OF 2</span>
      <svg className="ml-auto" width="20" height="20" viewBox="0 0 20 20" fill="none" stroke="#fff" strokeWidth="1.500">
        <path d="M1 1h18v18H1zM7 1v18M13 1v18M1 7h18M1 13h18" />
      </svg>
      <div className="ml-[19px] flex h-[33px] w-[57px] items-center justify-center bg-[#0a6332]">
        <svg width="20" height="20" viewBox="0 0 20 20" fill="none" stroke="#fff" strokeWidth="1.500">
          <path d="M1 1h18v18H1zM5 4h10v12.500H5zM7 7h6M7 10h6M7 13h6" />
        </svg>
      </div>
      <svg className="ml-[18px]" width="21" height="20" viewBox="0 0 21 20" fill="none" stroke="#fff" strokeWidth="1.500">
        <path d="M1 1h19v18H1z" /><path d="M2 1h5.500v12H2zM8.500 1H14v12H8.500z" fill="#fff" stroke="none" />
      </svg>
      <div className="ml-[26px] h-[3px] w-[9px] bg-white" />
      <svg className="ml-[6px]" width="150" height="18" viewBox="0 0 150 18" fill="#fff">
        <path d="M0 8.200h150v1.800H0zM56.500 0h6.500v18h-6.500zM75 5h1.500v8H75z" />
      </svg>
      <svg className="ml-[5px]" width="13" height="13" viewBox="0 0 13 13" fill="#fff"><path d="M5 0h3v5h5v3H8v5H5V8H0V5h5z" /></svg>
      <span className="ml-[21px] w-[55px] pt-px">80%</span>
    </div>
  );
}

function Taskbar() {
  return (
    <div className="flex h-[13px] overflow-hidden bg-[#0c0c0c]">
      <div className="ml-[72px] h-full w-[516px] bg-[#f1f1ef]" />
      <div className="ml-auto mt-[8px] w-[146px] text-[16px] leading-[12px] text-white">10:24</div>
      <div className="mr-[6px] h-full w-px bg-[#777]" />
    </div>
  );
}

export default function App() {
  return (
    <div className="h-[1152px] w-[2048px] overflow-hidden bg-[#fefefe] font-['Open_Sans','Noto_Sans',sans-serif]">
      <TitleBar />
      <Tabs />
      <Ribbon />
      <div className="h-[17px]" />
      <FormulaBar />
      <Sheet />
      <SheetTabs />
      <StatusBar />
      <Taskbar />
    </div>
  );
}
